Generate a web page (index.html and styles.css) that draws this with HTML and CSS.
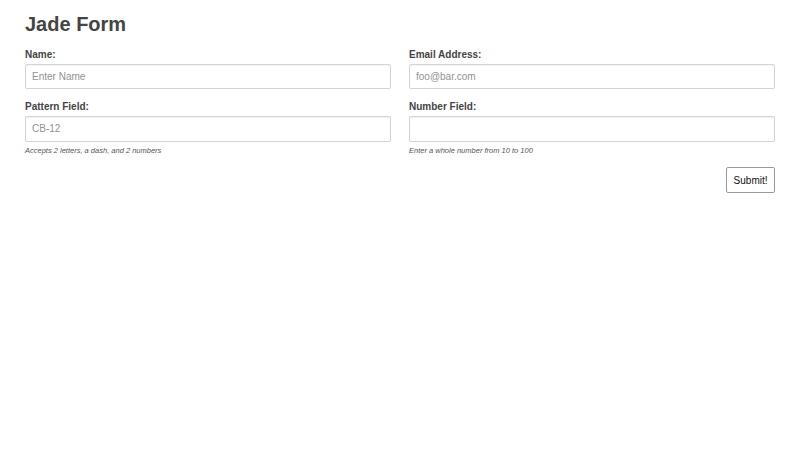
FILE: index.html
```html
<!DOCTYPE html>
<html lang="en">
<head>
<meta charset="utf-8">
<title>Jade Form</title>
<link rel="stylesheet" href="styles.css">
</head>
<body>
<div class="page">
  <h1 class="title">Jade Form</h1>
  <form class="form">
    <div class="grid">
      <div class="field">
        <label class="label" for="name">Name:</label>
        <input class="input" id="name" type="text" placeholder="Enter Name">
      </div>
      <div class="field">
        <label class="label" for="email">Email Address:</label>
        <input class="input" id="email" type="email" placeholder="foo@bar.com">
      </div>
      <div class="field">
        <label class="label" for="pattern">Pattern Field:</label>
        <input class="input" id="pattern" type="text" placeholder="CB-12">
        <div class="help">Accepts 2 letters, a dash, and 2 numbers</div>
      </div>
      <div class="field">
        <label class="label" for="number">Number Field:</label>
        <input class="input" id="number" type="text">
        <div class="help">Enter a whole number from 10 to 100</div>
      </div>
    </div>
    <div class="actions">
      <button class="btn" type="button">Submit!</button>
    </div>
  </form>
</div>
</body>
</html>
```
FILE: styles.css
```css
html, body {
  margin: 0;
  padding: 0;
  background: #fff;
}
body {
  font-family: "Liberation Sans", Arial, sans-serif;
  color: #444;
}
.page {
  padding: 0 25px;
}
.title {
  margin: 13px 0 0;
  font-size: 20px;
  line-height: 23px;
  font-weight: bold;
  color: #444;
}
.form {
  margin-top: 13px;
}
.grid {
  display: grid;
  grid-template-columns: 1fr 1fr;
  column-gap: 18px;
  row-gap: 12px;
}
.field {
  display: flex;
  flex-direction: column;
}
.label {
  display: block;
  font-size: 10px;
  line-height: 12px;
  font-weight: bold;
  color: #444;
  margin-bottom: 2.8px;
}
.input {
  box-sizing: border-box;
  height: 25.5px;
  width: 100%;
  margin: 0;
  padding: 0 6px;
  border: 1px solid #d4d4d4;
  border-radius: 2px;
  box-shadow: inset 0 1px 1px rgba(0, 0, 0, 0.05);
  font-family: "Liberation Sans", Arial, sans-serif;
  font-size: 10px;
  color: #333;
  background: #fff;
  outline: none;
}
.input::placeholder {
  color: #929292;
}
.help {
  margin-top: 4.5px;
  font-size: 7.5px;
  line-height: 9px;
  font-style: italic;
  color: #555;
}
.actions {
  display: flex;
  justify-content: flex-end;
  margin-top: 12px;
}
.btn {
  box-sizing: border-box;
  height: 26px;
  padding: 0 6.5px;
  border: 1px solid #999;
  border-radius: 2px;
  background: #fff;
  font-family: "Liberation Sans", Arial, sans-serif;
  font-size: 10px;
  color: #111;
}
```
